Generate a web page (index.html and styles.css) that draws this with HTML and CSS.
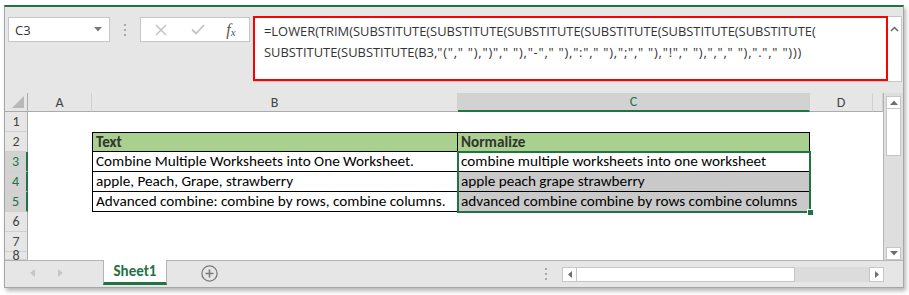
FILE: index.html
```html
<!DOCTYPE html>
<html>
<head>
<meta charset="utf-8">
<link rel="stylesheet" href="styles.css">
</head>
<body>
<div class="window">
  <div class="formula-bar">
    <div class="namebox"><span>C3</span><svg class="caret" width="8" height="5" viewBox="0 0 8 5"><path d="M0 0H8L4 4.5Z" fill="#7a7a7a"/></svg></div>
    <div class="sep"><i></i><i></i><i></i></div>
    <div class="fxbox">
      <span class="fxbtn x"><svg width="12" height="12" viewBox="0 0 12 12"><path d="M1 1L11 11M11 1L1 11" stroke="#c2c2c2" stroke-width="1.5" fill="none"/></svg></span>
      <span class="fxbtn ok"><svg width="14" height="11" viewBox="0 0 14 11"><path d="M1 5.5L5 9.5L13 1" stroke="#c2c2c2" stroke-width="1.8" fill="none"/></svg></span>
      <span class="fxbtn fx"><span class="f">f</span><span class="xx">x</span></span>
    </div>
    <div class="formula">
      <div class="formula-text">=LOWER(TRIM(SUBSTITUTE(SUBSTITUTE(SUBSTITUTE(SUBSTITUTE(SUBSTITUTE(SUBSTITUTE(<br>SUBSTITUTE(SUBSTITUTE(B3,<span class="args">"("," "),")"," "),"-"," "),":"," "),";"," "),"!"," "),","," "),"."," ")))</span></div>
      <div class="formula-side"><svg width="9" height="6" viewBox="0 0 9 6"><path d="M1 5L4.5 1.5L8 5" stroke="#666" stroke-width="1.5" fill="none"/></svg></div>
    </div>
  </div>
  <div class="main">
    <div class="sheet">
      <div class="corner"><svg width="12" height="12" viewBox="0 0 12 12"><path d="M12 0V12H0Z" fill="#b8b8b8"/></svg></div>
      <div class="ch">A</div><div class="ch">B</div><div class="ch sel">C</div><div class="ch">D</div><div class="ch"></div>

      <div class="rh">1</div><div></div><div></div><div></div><div></div><div></div>

      <div class="rh">2</div><div></div><div class="t hd top left">Text</div><div class="t hd top">Normalize</div><div></div><div></div>

      <div class="rh sel">3</div><div></div><div class="t left">Combine Multiple Worksheets into One Worksheet.</div><div class="t active">combine multiple worksheets into one worksheet<div class="selection"><span class="handle"></span></div></div><div></div><div></div>

      <div class="rh sel">4</div><div></div><div class="t left">apple, Peach, Grape, strawberry</div><div class="t grey">apple peach grape strawberry</div><div></div><div></div>

      <div class="rh sel">5</div><div></div><div class="t left">Advanced combine: combine by rows, combine columns.</div><div class="t grey">advanced combine combine by rows combine columns</div><div></div><div></div>

      <div class="rh">6</div><div></div><div></div><div></div><div></div><div></div>
      <div class="rh">7</div><div></div><div></div><div></div><div></div><div></div>
      <div class="rh">8</div><div></div><div></div><div></div><div></div><div></div>
    </div>
    <div class="vscroll">
      <div class="vbtn"><svg width="8" height="5" viewBox="0 0 8 5"><path d="M0 5H8L4 0.5Z" fill="#6e6e6e"/></svg></div>
      <div class="vthumb"></div>
      <div class="vtrack"></div>
      <div class="vbtn"><svg width="8" height="5" viewBox="0 0 8 5"><path d="M0 0H8L4 4.5Z" fill="#6e6e6e"/></svg></div>
    </div>
  </div>
  <div class="tabbar">
    <div class="nav">
      <svg class="nl" width="5" height="8" viewBox="0 0 5 8"><path d="M5 0V8L0 4Z" fill="#c6c6c6"/></svg>
      <svg class="nr" width="5" height="8" viewBox="0 0 5 8"><path d="M0 0V8L5 4Z" fill="#c6c6c6"/></svg>
    </div>
    <div class="tab">Sheet1</div>
    <div class="add"><svg width="17" height="17" viewBox="0 0 17 17"><circle cx="8.5" cy="8.5" r="7.6" stroke="#7a7a7a" stroke-width="1.3" fill="none"/><path d="M8.5 4.5V12.5M4.5 8.5H12.5" stroke="#7a7a7a" stroke-width="1.6"/></svg></div>
    <div class="spacer"></div>
    <div class="tdots"><i></i><i></i><i></i></div>
    <div class="hscroll">
      <div class="hbtn"><svg width="4" height="7" viewBox="0 0 4 7"><path d="M4 0V7L0 3.5Z" fill="#6e6e6e"/></svg></div>
      <div class="hthumb"></div>
      <div class="htrack"></div>
      <div class="hbtn"><svg width="4" height="7" viewBox="0 0 4 7"><path d="M0 0V7L4 3.5Z" fill="#6e6e6e"/></svg></div>
    </div>
  </div>
</div>
</body>
</html>
```
FILE: styles.css
```css
* { box-sizing: border-box; }
html, body { margin: 0; padding: 0; background: #fff; }
body { width: 909px; height: 295px; overflow: hidden; font-family: "Open Sans", "Liberation Sans", sans-serif; }

.window {
  margin: 5px 0 0 4px;
  width: 900px;
  height: 283px;
  border-top: 2px solid #217346;
  border-left: 1px solid #a6a6a6;
  border-right: 1px solid #a6a6a6;
  border-bottom: 1px solid #a6a6a6;
  background: #e6e6e6;
  box-shadow: 2px 3px 4px rgba(0,0,0,0.28);
  display: flex;
  flex-direction: column;
}

/* formula bar */
.formula-bar {
  height: 86px;
  flex: none;
  display: flex;
  align-items: flex-start;
  padding-top: 9px;
}
.namebox {
  margin-left: 3px;
  margin-top: 1px;
  width: 102px;
  height: 25px;
  background: #fff;
  border: 1px solid #c6c6c6;
  display: flex;
  align-items: center;
  justify-content: space-between;
  padding: 0 7px 0 6px;
  font-size: 13px;
  color: #333;
}
.sep {
  width: 30px;
  height: 25px;
  margin-top: 1px;
  display: flex;
  flex-direction: column;
  align-items: center;
  justify-content: center;
  gap: 3px;
}
.sep i, .tdots i { display: block; width: 2px; height: 2px; background: #a8a8a8; }
.fxbox {
  margin-top: 1px;
  width: 110px;
  height: 25px;
  background: #fff;
  border: 1px solid #c6c6c6;
  display: flex;
  align-items: center;
}
.fxbtn { display: flex; align-items: center; justify-content: center; height: 100%; }
.fxbtn.x { width: 39px; }
.fxbtn.ok { width: 36px; }
.fxbtn.fx { width: 30px; font-family: "Liberation Serif", serif; font-style: italic; color: #555; }
.fx .f { font-size: 16px; }
.fx .xx { font-size: 11px; margin-top: 4px; }

.formula {
  margin-left: 3px;
  width: 649px;
  height: 66px;
  background: #fff;
  border: 1px solid #c6c6c6;
  display: flex;
  align-items: flex-start;
}
.formula-text {
  margin: -1px 0 0 -1px;
  width: 635px;
  height: 65px;
  border: 2px solid #f00;
  padding: 3px 0 0 9px;
  font-size: 12.9px;
  line-height: 21px;
  color: #333;
  white-space: nowrap;
  overflow: hidden;
}
.formula-text .args { letter-spacing: 0.78px; }
.formula-side {
  flex: 1;
  display: flex;
  justify-content: center;
  padding-top: 9px;
}

/* sheet */
.main { height: 167px; flex: none; display: flex; }
.sheet {
  width: 878px;
  height: 167px;
  display: grid;
  grid-template-columns: 23px 64px 366px 352px 63px 10px;
  grid-template-rows: 19px repeat(7, 20px) 8px;
  background: #fff;
  overflow: hidden;
  font-family: "Carlito", "Lato", sans-serif;
}
.corner {
  background: #e6e6e6;
  border-right: 1px solid #ababab;
  border-bottom: 1px solid #ababab;
  display: flex;
  align-items: flex-end;
  justify-content: flex-end;
  padding: 0 3px 3px 0;
}
.ch {
  background: #e6e6e6;
  border-right: 1px solid #d0d0d0;
  border-bottom: 1px solid #ababab;
  display: flex;
  align-items: center;
  justify-content: center;
  font-size: 14px;
  color: #444;
}
.ch.sel { background: #d2d2d2; color: #217346; border-bottom: 2px solid #217346; }
.rh {
  background: #e6e6e6;
  border-right: 1px solid #ababab;
  border-bottom: 1px solid #d0d0d0;
  display: flex;
  align-items: center;
  justify-content: center;
  font-size: 14px;
  color: #444;
}
.rh.sel { background: #d2d2d2; color: #217346; border-right: 2px solid #217346; }
.t {
  border-right: 1px solid #000;
  border-bottom: 1px solid #000;
  padding-left: 3px;
  font-size: 15.2px;
  line-height: 19px;
  color: #000;
  white-space: nowrap;
}
.t.top { border-top: 1px solid #000; line-height: 18px; }
.t.left { border-left: 1px solid #000; padding-left: 3px; }
.t.hd { background: #a9d08e; font-weight: 700; color: #333; }
.t.grey { background: #c9c9c9; }
.t.active { position: relative; }
.selection {
  position: absolute;
  left: -1px;
  top: -1px;
  width: 354px;
  height: 62px;
  border: 2px solid #217346;
  z-index: 2;
  pointer-events: none;
}
.handle {
  position: absolute;
  right: -5px;
  bottom: -5px;
  width: 7px;
  height: 7px;
  background: #217346;
  border: 1px solid #fff;
}

.vscroll {
  width: 20px;
  border-left: 1px solid #b4b4b4;
  background: #dedede;
  padding: 3px 2px 0 2px;
  display: flex;
  flex-direction: column;
}
.vbtn {
  width: 15px;
  height: 13px;
  background: #fff;
  border: 1px solid #c6c6c6;
  display: flex;
  align-items: center;
  justify-content: center;
  flex: none;
}
.vthumb { height: 47px; background: #fff; border: 1px solid #c6c6c6; border-top: none; width: 15px; flex: none; }
.vtrack { flex: 1; }

/* tab bar */
.tabbar {
  height: 27px;
  flex: none;
  border-top: 1px solid #b4b4b4;
  display: flex;
  align-items: flex-start;
  font-family: "Carlito", "Lato", sans-serif;
}
.nav { width: 98px; height: 24px; display: flex; align-items: center; padding-left: 25px; }
.nav .nr { margin-left: 23px; }
.tab {
  width: 64px;
  height: 25px;
  margin-top: -1px;
  background: #fff;
  border-left: 1px solid #b4b4b4;
  border-right: 1px solid #b4b4b4;
  border-bottom: 3px solid #217346;
  display: flex;
  align-items: center;
  justify-content: center;
  font-weight: 700;
  font-size: 15px;
  color: #217346;
}
.add { margin-left: 34px; margin-top: 4px; display: flex; }
.spacer { flex: 1; }
.tdots { display: flex; flex-direction: column; gap: 3px; margin-top: 7px; margin-right: 15px; }
.hscroll { width: 322px; height: 15px; margin-top: 6px; margin-right: 19px; display: flex; background: #dcdcdc; }
.hbtn {
  width: 15px;
  height: 15px;
  background: #fff;
  border: 1px solid #c6c6c6;
  display: flex;
  align-items: center;
  justify-content: center;
  flex: none;
}
.hthumb { width: 218px; background: #fff; border: 1px solid #c6c6c6; border-left: none; flex: none; }
.htrack { flex: 1; }
```
